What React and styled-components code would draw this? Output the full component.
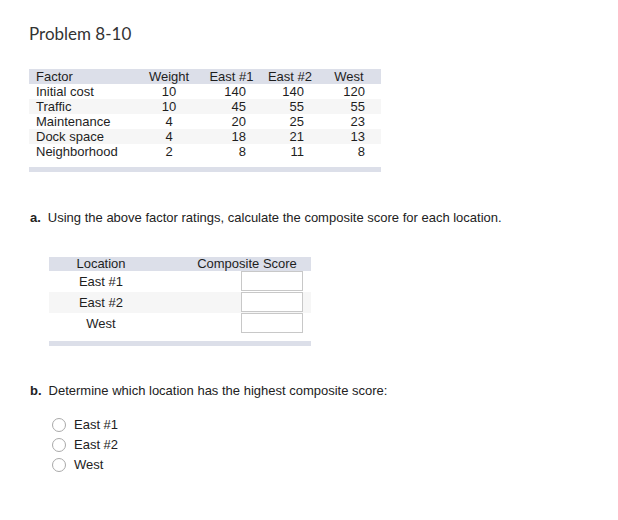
import React from "react";
import styled, { createGlobalStyle } from "styled-components";

const GlobalStyle = createGlobalStyle`
  body {
    margin: 0;
    background: #fff;
    font-family: "Liberation Sans", Arial, sans-serif;
    color: #222;
  }
`;

const Page = styled.div`
  width: 618px;
  height: 520px;
  padding: 22px 0 0 29px;
  box-sizing: border-box;
`;

const Title = styled.h1`
  margin: 0;
  font-family: "Lato", "Open Sans", sans-serif;
  font-weight: 400;
  font-size: 17px;
  line-height: 24px;
  color: #333;
`;

const DataTable = styled.div`
  margin-top: 23px;
  width: 352px;
  display: grid;
  grid-template-columns: 111px 60px 61px 58px 62px;
  font-size: 13px;
  line-height: 15px;
  color: #1e1e1e;
`;

const Row = styled.div`
  display: contents;
  & > div {
    background: ${(p) => (p.$head ? "#dcdfe9" : p.$stripe ? "#f6f6f6" : "#fff")};
  }
`;

const Cell = styled.div`
  text-align: ${(p) => p.$align || "left"};
  padding-left: ${(p) => (p.$pl !== undefined ? p.$pl : p.$align ? 0 : 7)}px;
  padding-right: ${(p) => p.$pr || 0}px;
  white-space: nowrap;
`;

const BottomBar = styled.div`
  width: ${(p) => p.$w}px;
  height: 5px;
  background: #dcdfe9;
  margin-top: ${(p) => p.$mt}px;
  margin-left: ${(p) => p.$ml || 0}px;
`;

const Question = styled.p`
  margin: ${(p) => p.$mt}px 0 0 1px;
  font-size: 13px;
  line-height: 16px;
  color: #222;

  b {
    margin-right: 7px;
  }
`;

const ScoreTable = styled.div`
  margin: 31px 0 0 20px;
  width: 262px;
  display: grid;
  grid-template-columns: 104px 158px;
  font-size: 13px;
  color: #1e1e1e;
`;

const ScoreHead = styled.div`
  background: #dcdfe9;
  line-height: 14px;
  height: 14px;
  text-align: center;
  padding-left: ${(p) => p.$pl || 0}px;
  white-space: nowrap;
`;

const ScoreCell = styled.div`
  background: ${(p) => (p.$stripe ? "#f6f6f6" : "#fff")};
  height: 21px;
  line-height: 21px;
  display: flex;
  justify-content: ${(p) => (p.$input ? "flex-end" : "center")};
  align-items: flex-start;
  padding-right: ${(p) => (p.$input ? 8 : 0)}px;
`;

const ScoreInput = styled.input`
  width: 62px;
  height: 20px;
  box-sizing: border-box;
  border: 1px solid #c8c8c8;
  background: #fff;
  margin: 0;
  padding: 0;
`;

const Options = styled.div`
  margin: 19px 0 0 23px;
  display: flex;
  flex-direction: column;
  gap: 6px;
`;

const Option = styled.label`
  display: flex;
  align-items: center;
  gap: 8px;
  font-size: 13px;
  line-height: 14px;
  color: #222;
`;

const Radio = styled.span`
  width: 12px;
  height: 12px;
  border: 1px solid #a9a9a9;
  border-radius: 50%;
  background: #fff;
`;

const factors = [
  ["Initial cost", 10, 140, 140, 120],
  ["Traffic", 10, 45, 55, 55],
  ["Maintenance", 4, 20, 25, 23],
  ["Dock space", 4, 18, 21, 13],
  ["Neighborhood", 2, 8, 11, 8],
];

const locations = ["East #1", "East #2", "West"];

export default function App() {
  return (
    <Page>
      <GlobalStyle />
      <Title>Problem 8-10</Title>

      <DataTable>
        <Row $head>
          <Cell>Factor</Cell>
          <Cell $align="center" $pr={2}>Weight</Cell>
          <Cell $align="center" $pl={2}>East #1</Cell>
          <Cell $align="center">East #2</Cell>
          <Cell $align="center" $pr={2}>West</Cell>
        </Row>
        {factors.map((f, i) => (
          <Row key={f[0]} $stripe={i % 2 === 1}>
            <Cell>{f[0]}</Cell>
            <Cell $align="center" $pr={2}>{f[1]}</Cell>
            <Cell $align="right" $pr={15}>{f[2]}</Cell>
            <Cell $align="right" $pr={15}>{f[3]}</Cell>
            <Cell $align="right" $pr={16}>{f[4]}</Cell>
          </Row>
        ))}
      </DataTable>
      <BottomBar $w={352} $mt={8} />

      <Question $mt={38}>
        <b>a.</b>Using the above factor ratings, calculate the composite score for each location.
      </Question>

      <ScoreTable>
        <ScoreHead>Location</ScoreHead>
        <ScoreHead $pl={30}>Composite Score</ScoreHead>
        {locations.map((l, i) => (
          <React.Fragment key={l}>
            <ScoreCell $stripe={i === 1}>{l}</ScoreCell>
            <ScoreCell $stripe={i === 1} $input>
              <ScoreInput type="text" />
            </ScoreCell>
          </React.Fragment>
        ))}
      </ScoreTable>
      <BottomBar $w={262} $mt={7} $ml={20} />

      <Question $mt={37}>
        <b>b.</b>Determine which location has the highest composite score:
      </Question>

      <Options>
        {locations.map((l) => (
          <Option key={l}>
            <Radio />
            {l}
          </Option>
        ))}
      </Options>
    </Page>
  );
}
